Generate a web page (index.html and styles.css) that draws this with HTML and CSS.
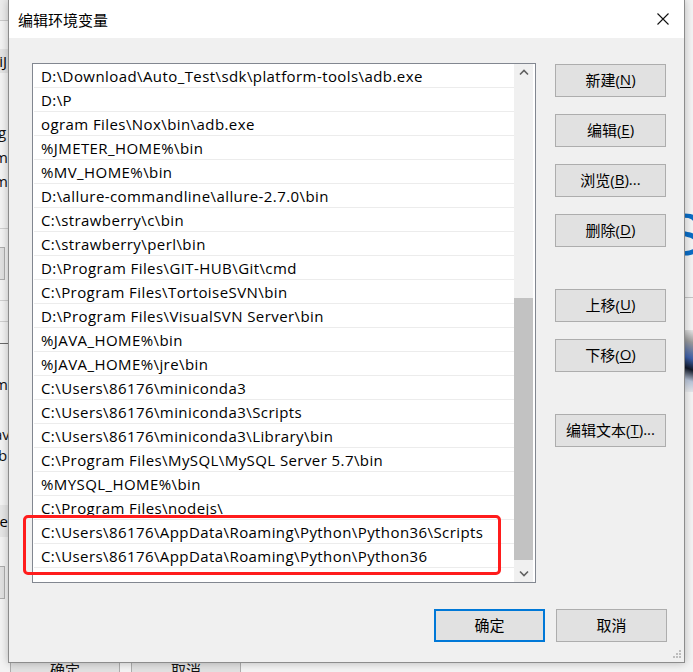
FILE: index.html
```html
<!DOCTYPE html>
<html lang="zh-CN">
<head>
<meta charset="utf-8">
<title>编辑环境变量</title>
<link rel="stylesheet" href="styles.css">
</head>
<body>
<div class="desktop">
  <div class="bgwin">
    <div class="bg-topband"></div>
    <div class="bg-tab"><span>iJ</span></div>
    <span class="frag f1">g</span>
    <span class="frag f2">m</span>
    <span class="frag f3">m</span>
    <div class="bg-line l1"></div>
    <div class="bg-btn b1"></div>
    <div class="bg-line l2"></div>
    <div class="bg-line l3"></div>
    <div class="bg-dark"></div>
    <span class="frag f4">m</span>
    <span class="frag f5">av</span>
    <span class="frag f6">b</span>
    <div class="bg-band"><span>ne</span></div>
    <div class="bg-btn b2"></div>
    <span class="bg-s">S</span>
    <div class="bg-line r1"></div>
    <div class="bg-img"></div>
    <div class="bg-bottom">
      <div class="bg-okbtn">确定</div>
      <div class="bg-okbtn">取消</div>
    </div>
  </div>

  <div class="dialog">
    <div class="titlebar">
      <span class="title">编辑环境变量</span>
      <span class="close">
        <svg width="12" height="12" viewBox="0 0 12 12"><path d="M0.5 0.5 L11.5 11.5 M11.5 0.5 L0.5 11.5" stroke="#111" stroke-width="1.1" fill="none"/></svg>
      </span>
    </div>
    <div class="content">
      <div class="main">
        <div class="list">
          <div class="rows">
            <div class="row">D:\Download\Auto_Test\sdk\platform-tools\adb.exe</div>
            <div class="row">D:\P</div>
            <div class="row">ogram Files\Nox\bin\adb.exe</div>
            <div class="row">%JMETER_HOME%\bin</div>
            <div class="row">%MV_HOME%\bin</div>
            <div class="row">D:\allure-commandline\allure-2.7.0\bin</div>
            <div class="row">C:\strawberry\c\bin</div>
            <div class="row">C:\strawberry\perl\bin</div>
            <div class="row">D:\Program Files\GIT-HUB\Git\cmd</div>
            <div class="row">C:\Program Files\TortoiseSVN\bin</div>
            <div class="row">D:\Program Files\VisualSVN Server\bin</div>
            <div class="row">%JAVA_HOME%\bin</div>
            <div class="row">%JAVA_HOME%\jre\bin</div>
            <div class="row">C:\Users\86176\miniconda3</div>
            <div class="row">C:\Users\86176\miniconda3\Scripts</div>
            <div class="row">C:\Users\86176\miniconda3\Library\bin</div>
            <div class="row">C:\Program Files\MySQL\MySQL Server 5.7\bin</div>
            <div class="row">%MYSQL_HOME%\bin</div>
            <div class="row">C:\Program Files\nodejs\</div>
            <div class="row">C:\Users\86176\AppData\Roaming\Python\Python36\Scripts</div>
            <div class="row">C:\Users\86176\AppData\Roaming\Python\Python36</div>
          </div>
          <div class="scrollbar">
            <div class="arrow">
              <svg width="10" height="7" viewBox="0 0 10 7"><path d="M1 5.5 L5 1.5 L9 5.5" stroke="#606060" stroke-width="1.6" fill="none"/></svg>
            </div>
            <div class="track"><div class="thumb"></div></div>
            <div class="arrow">
              <svg width="10" height="7" viewBox="0 0 10 7"><path d="M1 1.5 L5 5.5 L9 1.5" stroke="#606060" stroke-width="1.6" fill="none"/></svg>
            </div>
          </div>
        </div>
        <div class="side">
          <div class="btn">新建(<u>N</u>)</div>
          <div class="btn">编辑(<u>E</u>)</div>
          <div class="btn">浏览(<u>B</u>)...</div>
          <div class="btn">删除(<u>D</u>)</div>
          <div class="btn gap">上移(<u>U</u>)</div>
          <div class="btn">下移(<u>O</u>)</div>
          <div class="btn gap">编辑文本(<u>T</u>)...</div>
        </div>
      </div>
      <div class="footer">
        <div class="btn default">确定</div>
        <div class="btn">取消</div>
      </div>
    </div>
    <svg class="grip" width="11" height="11" viewBox="0 0 11 11">
      <rect x="8" y="0" width="2" height="2" fill="#bdbdbd"/>
      <rect x="5" y="3" width="2" height="2" fill="#bdbdbd"/>
      <rect x="8" y="3" width="2" height="2" fill="#bdbdbd"/>
      <rect x="2" y="6" width="2" height="2" fill="#bdbdbd"/>
      <rect x="5" y="6" width="2" height="2" fill="#bdbdbd"/>
      <rect x="8" y="6" width="2" height="2" fill="#bdbdbd"/>
    </svg>
    <div class="highlight"></div>
  </div>
</div>
</body>
</html>
```

FILE: styles.css
```css
* { box-sizing: border-box; }
html, body { margin: 0; padding: 0; }
body {
  font-family: "Open Sans", "Noto Sans CJK SC", sans-serif;
  font-size: 15px;
  color: #000;
  background: #f0f0f0;
}
.desktop {
  position: relative;
  width: 693px;
  height: 672px;
  overflow: hidden;
}

/* background window (behind the dialog) */
.bgwin {
  position: absolute;
  inset: 0;
  background: #f3f3f3;
}
.bg-topband {
  position: absolute; left: 0; top: 0; width: 20px; height: 21px;
  background: #ebebeb; border-bottom: 1px solid #c9c9c9;
}
.bg-tab {
  position: absolute; left: -20px; top: 49px; width: 40px; height: 24px;
  background: #e4e4e4; line-height: 24px; text-align: right; padding-right: 13px;
}
.frag { position: absolute; line-height: 20px; color: #111; }
.f1 { left: -2px; top: 122px; }
.f2 { left: -6px; top: 147px; }
.f3 { left: -6px; top: 171px; }
.f4 { left: -6px; top: 374px; }
.f5 { left: -6px; top: 424px; }
.f6 { left: -2px; top: 445px; }
.bg-line { position: absolute; height: 1px; background: #cfcfcf; }
.l1 { left: 0; top: 228px; width: 20px; }
.l2 { left: 0; top: 300px; width: 20px; }
.l3 { left: 0; top: 321px; width: 20px; }
.bg-dark { position: absolute; left: 0; top: 343px; width: 20px; height: 1px; background: #6a6a6a; }
.bg-btn {
  position: absolute; left: -20px; width: 25px; height: 33px;
  background: #e1e1e1; border: 1px solid #adadad;
}
.b1 { top: 247px; }
.b2 { top: 566px; }
.bg-band {
  position: absolute; left: -20px; top: 505px; width: 40px; height: 32px;
  background: #e6e6e6; line-height: 32px; text-align: right; padding-right: 12px;
}
.bg-s {
  position: absolute; left: 664px; top: 200px;
  font-family: "Liberation Sans", sans-serif; font-size: 60px; color: #0a6cc4; line-height: 70px;
}
.r1 { left: 684px; top: 297px; width: 9px; background: #c4c4c4; }
.bg-img {
  position: absolute; left: 684px; top: 330px; width: 10px; height: 62px;
  background: linear-gradient(200deg, #e8e8e8 0%, #9a9a9a 20%, #3d5fa8 45%, #111827 62%, #b8c4d8 80%, #eeeeee 100%);
}
.bg-bottom {
  position: absolute; left: 10px; top: 662px; display: flex; gap: 11px;
}
.bg-okbtn {
  width: 110px; height: 33px; background: #e1e1e1; border: 1px solid #adadad;
  text-align: center; line-height: 14px; color: #111;
}

/* dialog */
.dialog {
  position: absolute;
  left: 8px; top: 0;
  width: 677px; height: 663px;
  background: #f0f0f0;
  border: 1px solid #8c8c8c;
  border-top: none;
  box-shadow: 0 0 8px rgba(0,0,0,0.25);
  display: flex;
  flex-direction: column;
}
.titlebar {
  height: 38px;
  background: #fff;
  display: flex;
  align-items: center;
  justify-content: space-between;
  padding: 0 15px 0 9px;
  flex-shrink: 0;
}
.title { font-size: 15px; line-height: 20px; padding-top: 1px; }
.close { display: flex; width: 12px; height: 12px; }
.content {
  flex: 1;
  display: flex;
  flex-direction: column;
  padding: 25px 17px 0 23px;
}
.main { display: flex; }
.list {
  width: 504px;
  height: 520px;
  border: 1px solid #828790;
  background: #fff;
  display: flex;
}
.rows { width: 481px; }
.row {
  height: 24px;
  line-height: 21px;
  padding: 2px 0 0 7px;
  border-bottom: 1px solid #ececec;
  margin-left: 1px;
  white-space: nowrap;
  overflow: hidden;
  letter-spacing: 0.42px;
}
.scrollbar {
  width: 19px;
  margin-right: 2px;
  background: #f0f0f0;
  display: flex;
  flex-direction: column;
}
.arrow {
  height: 17px;
  display: flex;
  align-items: center;
  justify-content: center;
}
.track { flex: 1; display: flex; flex-direction: column; }
.thumb {
  margin-top: 217px;
  height: 262px;
  background: #c2c2c2;
}
.side {
  margin-left: 19px;
  padding-top: 1px;
  display: flex;
  flex-direction: column;
  gap: 17px;
}
.btn {
  width: 111px;
  height: 33px;
  background: #e1e1e1;
  border: 1px solid #adadad;
  display: flex;
  align-items: center;
  justify-content: center;
  font-size: 15px;
  white-space: nowrap;
  padding-bottom: 3px;
}
.btn u { text-underline-offset: 2px; }
.side .gap { margin-top: 25px; }
.footer {
  display: flex;
  justify-content: flex-end;
  gap: 11px;
  margin-top: 26px;
}
.btn.default { border: 2px solid #0078d7; }
.grip {
  position: absolute;
  right: 2px; bottom: 1px;
}
.highlight {
  position: absolute;
  left: 14px; top: 515px;
  width: 478px; height: 60px;
  border: 3px solid #ff1c1c;
  border-radius: 5px;
}
```
